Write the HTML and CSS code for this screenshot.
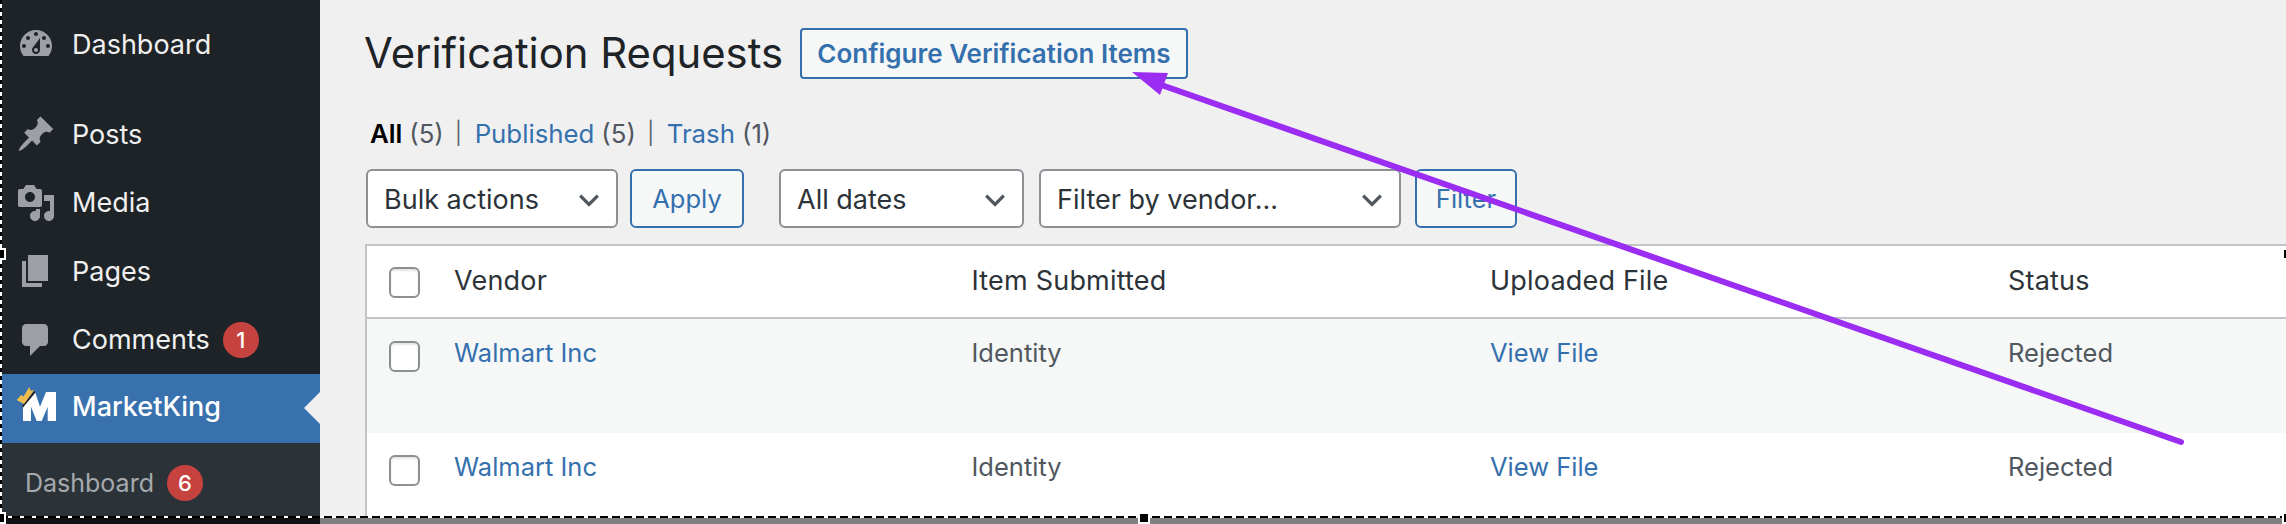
FILE: index.html
```html
<!DOCTYPE html>
<html lang="en">
<head>
<meta charset="utf-8">
<title>Verification Requests</title>
<link rel="stylesheet" href="styles.css">
</head>
<body>
<div class="frame">
  <div class="shell">
    <nav class="sidebar">
      <a class="menu-item first">
        <svg class="menu-icon" viewBox="0 0 20 20"><path fill-rule="evenodd" d="M3.76 16h12.48c1.1-1.37 1.76-3.11 1.76-5 0-4.42-3.58-8-8-8s-8 3.58-8 8c0 1.89.66 3.63 1.76 5zM10 4c.55 0 1 .45 1 1s-.45 1-1 1-1-.45-1-1 .45-1 1-1zM6 6c.55 0 1 .45 1 1s-.45 1-1 1-1-.45-1-1 .45-1 1-1zm8 0c.55 0 1 .45 1 1s-.45 1-1 1-1-.45-1-1 .45-1 1-1zm-5.37 5.55L12 7v6c0 1.1-.9 2-2 2s-2-.9-2-2c0-.57.24-1.08.63-1.45zM4 10c.55 0 1 .45 1 1s-.45 1-1 1-1-.45-1-1 .45-1 1-1zm12 0c.55 0 1 .45 1 1s-.45 1-1 1-1-.45-1-1 .45-1 1-1zm-5 3c0-.55-.45-1-1-1s-1 .45-1 1 .45 1 1 1 1-.45 1-1z"/></svg>
        <span>Dashboard</span>
      </a>
      <a class="menu-item separated">
        <svg class="menu-icon" viewBox="0 0 20 20"><path d="M10.44 3.02l1.82-1.82 6.36 6.35-1.83 1.82c-1.05-.68-2.48-.57-3.41.36l-.75.75c-.92.93-1.04 2.35-.35 3.41l-1.83 1.82-2.41-2.41-2.8 2.79c-.42.42-3.38 2.71-3.8 2.29s1.86-3.39 2.28-3.81l2.79-2.79L4.1 9.36l1.83-1.82c1.05.69 2.48.57 3.4-.36l.75-.75c.93-.92 1.05-2.35.36-3.41z"/></svg>
        <span>Posts</span>
      </a>
      <a class="menu-item">
        <svg class="menu-icon" viewBox="0 0 20 20"><path fill-rule="evenodd" d="M13 11V4c0-.55-.45-1-1-1h-1.67L9 1H5L3.67 3H2c-.55 0-1 .45-1 1v7c0 .55.45 1 1 1h10c.55 0 1-.45 1-1zM7 4.500c1.38 0 2.500 1.120 2.500 2.500S8.380 9.500 7 9.500 4.500 8.380 4.500 7 5.620 4.500 7 4.500zM14 6h5v10.500c0 1.380-1.120 2.500-2.500 2.500S14 17.880 14 16.500s1.120-2.500 2.500-2.500c.17 0 .34.02.5.05V9h-3V6zm-4 8.050V13h2v3.500c0 1.380-1.120 2.500-2.500 2.500S7 17.880 7 16.500 8.120 14 9.500 14c.17 0 .34.02.5.05z"/></svg>
        <span>Media</span>
      </a>
      <a class="menu-item">
        <svg class="menu-icon" viewBox="0 0 20 20"><path d="M6 15V2h10v13H6zm-1 1h8v2H3V5h2v11z"/></svg>
        <span>Pages</span>
      </a>
      <a class="menu-item">
        <svg class="menu-icon" viewBox="0 0 20 20"><path d="M5 2h9c1.1 0 2 .9 2 2v7c0 1.1-.9 2-2 2h-2l-5 5v-5H5c-1.1 0-2-.9-2-2V4c0-1.1.9-2 2-2z"/></svg>
        <span>Comments</span>
        <span class="badge">1</span>
      </a>
      <a class="menu-item active">
        <svg class="brand-icon" viewBox="0 0 40 40">
          <path class="brand-m" d="M7 33V18.700L19 4l5 14.700L30 4h10v29h-8.300V18.700L25.700 33h-5L15 18.700V33z"/>
          <path class="brand-shadow" d="M6 18 18 3l1.500 1.500L7 19.500z"/>
          <path class="brand-crown" d="M.7 12 5.300 6.700 7.300 8.700 13.300-1l1.400 3.700L18.300 2 8 16z"/>
        </svg>
        <span>MarketKing</span>
      </a>
      <a class="submenu-item">
        <span>Dashboard</span>
        <span class="badge">6</span>
      </a>
    </nav>
    <main class="content">
      <header class="title-row">
        <h1 class="page-title">Verification Requests</h1>
        <a class="title-button">Configure Verification Items</a>
      </header>
      <ul class="views">
        <li><a class="current">All</a> <span class="count">(5)</span><span class="sep">|</span></li>
        <li><a class="link">Published</a> <span class="count">(5)</span><span class="sep">|</span></li>
        <li><a class="link">Trash</a> <span class="count">(1)</span></li>
      </ul>
      <div class="filters">
        <div class="select select-bulk"><span>Bulk actions</span><svg class="chevron" viewBox="0 0 20 12"><path d="M2 2l8 8 8-8"/></svg></div>
        <button class="button button-apply">Apply</button>
        <div class="select select-dates"><span>All dates</span><svg class="chevron" viewBox="0 0 20 12"><path d="M2 2l8 8 8-8"/></svg></div>
        <div class="select select-vendor"><span>Filter by vendor...</span><svg class="chevron" viewBox="0 0 20 12"><path d="M2 2l8 8 8-8"/></svg></div>
        <button class="button button-filter">Filter</button>
      </div>
      <section class="table">
        <div class="row head">
          <div class="check-cell"><span class="checkbox"></span></div>
          <div class="head-label">Vendor</div>
          <div class="head-label">Item Submitted</div>
          <div class="head-label">Uploaded File</div>
          <div class="head-label">Status</div>
        </div>
        <div class="row alt tall">
          <div class="check-cell"><span class="checkbox"></span></div>
          <div><a class="link">Walmart Inc</a></div>
          <div>Identity</div>
          <div><a class="link">View File</a></div>
          <div>Rejected</div>
        </div>
        <div class="row tall">
          <div class="check-cell"><span class="checkbox"></span></div>
          <div><a class="link">Walmart Inc</a></div>
          <div>Identity</div>
          <div><a class="link">View File</a></div>
          <div>Rejected</div>
        </div>
      </section>
    </main>
  </div>
  <div class="strip"><div class="strip-dark"></div><div class="strip-grey"></div><div class="strip-end"></div></div>

  <svg class="arrow" viewBox="0 0 2286 524">
    <line x1="2181" y1="442" x2="1150" y2="81"/>
    <polygon points="1132,72 1168,73 1160,95"/>
  </svg>
  <div class="dash dash-left"></div>
  <div class="dash dash-bottom"></div>
  <span class="handle handle-left"></span>
  <span class="handle handle-corner"></span>
  <span class="handle handle-bottom"></span>
  <span class="grip grip-top"></span>
  <span class="grip grip-low"></span>
</div>
</body>
</html>
```
FILE: styles.css
```css
* { box-sizing: border-box; }
html, body { margin: 0; padding: 0; }
body { width: 2286px; height: 524px; overflow: hidden; background: #f0f0f1; font-family: Inter, "Liberation Sans", sans-serif; }
a { text-decoration: none; }

.frame { position: relative; width: 2286px; height: 524px; display: flex; flex-direction: column; overflow: hidden; }
.shell { display: flex; height: 517px; flex: none; }

.sidebar { width: 320px; flex: none; background: #1d2327; padding-top: 10px; display: flex; flex-direction: column; overflow: hidden; }
.menu-item { height: 68.5px; flex: none; display: flex; align-items: center; padding-left: 16px; color: #f0f0f1; font-size: 27px; position: relative; }
.menu-item.first { height: 68px; }
.menu-item.separated { margin-top: 22px; }
.menu-icon { width: 40px; height: 40px; margin-right: 16px; fill: #9ca0a5; flex: none; }
.brand-icon { width: 40px; height: 40px; margin-right: 16px; flex: none; overflow: visible; }
.brand-m { fill: #fff; }
.brand-shadow { fill: #1d2327; }
.brand-crown { fill: #eebd4f; }
.menu-item.active { background: #3871ad; color: #fff; font-weight: 500; }
.menu-item.active span { padding-bottom: 3px; }
.menu-item.active::after { content: ""; position: absolute; right: 0; top: 18px; border: 16px solid transparent; border-left: 0; border-right: 16px solid #f0f0f1; }
.submenu-item { flex: 1; background: #2c3338; color: #a6a9ad; font-size: 25px; display: flex; align-items: center; padding: 7px 0 0 25px; }
.badge { width: 36px; height: 36px; border-radius: 50%; background: #c5423e; color: #fff; font-size: 22px; font-weight: 500; display: flex; align-items: center; justify-content: center; margin-left: 13px; flex: none; }

.content { flex: 1; min-width: 0; padding: 28px 0 0 45px; overflow: hidden; color: #50575e; font-size: 25.5px; }
.link { color: #3470ad; }

.title-row { display: flex; align-items: center; height: 51px; }
.page-title { margin: 0 0 0 -1px; font-size: 41.8px; font-weight: 400; color: #1d2327; line-height: 51px; white-space: nowrap; }
.title-button { margin-left: 17px; height: 51px; width: 388px; border: 2px solid #3470ad; border-radius: 4px; background: #f6f7f7; color: #3470ad; font-size: 26px; font-weight: 600; display: flex; align-items: center; justify-content: center; white-space: nowrap; }

.views { list-style: none; margin: 33px 0 1px 5px; padding: 0; display: flex; height: 42px; align-items: center; white-space: nowrap; font-size: 25.8px; }
.views li { display: flex; gap: 7px; align-items: center; }
.current { color: #000; font-weight: 600; }
.count { color: #50575e; }
.sep { color: #646970; font-size: 22px; margin: 0 12.5px 0 4px; }

.filters { display: flex; margin-top: 15px; height: 59px; }
.select { height: 59px; border: 2px solid #8c8f94; border-radius: 6px; background: #fff; color: #2c3338; font-size: 27px; display: flex; align-items: center; justify-content: space-between; padding: 2px 16px 0 16px; }
.select-bulk { width: 252px; margin-left: 1px; }
.select-dates { width: 245px; margin-left: 35px; }
.select-vendor { width: 362px; margin-left: 15px; }
.chevron { width: 22px; height: 14px; fill: none; stroke: #50575e; stroke-width: 3; }
.button { height: 59px; border: 2px solid #3470ad; border-radius: 6px; background: #f6f7f7; color: #3470ad; font: inherit; padding: 0; margin: 0; }
.button-apply { width: 114px; margin-left: 12px; }
.button-filter { width: 102px; margin-left: 14px; }

.table { margin-top: 16px; width: 1921px; background: #fff; border-top: 2px solid #c3c4c7; border-left: 2px solid #c3c4c7; }
.row { display: grid; grid-template-columns: 87px 517.5px 518.5px 518px 1fr; }
.head { height: 73px; align-items: center; border-bottom: 2px solid #c3c4c7; color: #2c3338; }
.head-label { font-size: 27px; letter-spacing: .2px; padding-bottom: 3px; }
.alt { background: #f6f7f7; }
.tall { height: 114px; padding-top: 15px; line-height: 38px; align-items: start; }
.check-cell { padding-left: 22px; display: flex; }
.checkbox { width: 31px; height: 31px; border: 2px solid #8c8f94; border-radius: 6px; background: #fff; display: block; box-shadow: inset 0 2px 2px rgba(0,0,0,.1); }
.head .checkbox { margin-top: 2px; }
.tall .checkbox { margin-top: 7px; }

.strip { height: 7px; flex: none; display: flex; }
.strip-dark { width: 320px; background: #0f1214; }
.strip-grey { flex: 1; background: #808080; }
.strip-end { width: 4px; background: #fff; }

.arrow { position: absolute; left: 0; top: 0; width: 2286px; height: 524px; pointer-events: none; }
.arrow line { stroke: #9b2cf2; stroke-width: 6; stroke-linecap: round; }
.arrow polygon { fill: #9b2cf2; }

.dash { position: absolute; }
.dash-left { left: 0; top: 0; width: 2px; height: 518px; background: repeating-linear-gradient(180deg, #000 0 4px, #fff 4px 8px); }
.dash-bottom { left: 0; top: 516px; width: 2282px; height: 2px; background: repeating-linear-gradient(90deg, #000 0 8px, #fff 8px 12px); }
.handle { position: absolute; background: #000; border: 2px solid #fff; border-left-width: 0; }
.handle-left { left: 0; top: 248px; width: 6px; height: 12px; }
.handle-corner { left: 0; top: 512px; width: 6px; height: 12px; }
.handle-bottom { left: 1138px; top: 512px; width: 12px; height: 12px; border-left-width: 2px; }
.grip { position: absolute; left: 2284px; width: 2px; height: 8px; background: #000; }
.grip-top { top: 250px; }
.grip-low { top: 514px; }
```
